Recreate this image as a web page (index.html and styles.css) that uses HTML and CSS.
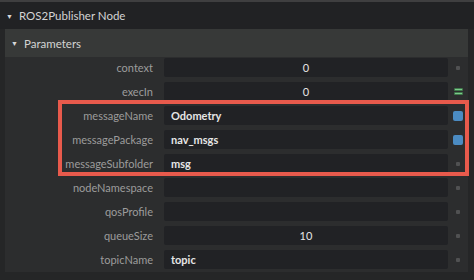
FILE: index.html
```html
<!DOCTYPE html>
<html lang="en">
<head>
  <meta charset="UTF-8">
  <title>ROS2Publisher Node</title>
  <link rel="stylesheet" href="styles.css">
</head>
<body>
  <div class="topline"></div>

  <!-- Node header -->
  <header class="node-header">
    <span class="caret">&#9660;</span>
    <span class="node-title">ROS2Publisher Node</span>
  </header>

  <section class="panel">
    <div class="panel-header">
      <span class="caret">&#9660;</span>
      <span>Parameters</span>
    </div>

    <div class="rows">
      <div class="row">
        <label class="label">context</label>
        <div class="field num">0</div>
        <span class="pin"><span class="dot"></span></span>
      </div>
      <div class="row">
        <label class="label">execIn</label>
        <div class="field num">0</div>
        <span class="pin"><span class="exec"><i></i><i></i></span></span>
      </div>

      <div class="highlight">
        <div class="row">
          <label class="label">messageName</label>
          <div class="field">Odometry</div>
          <span class="pin"><span class="blue"></span></span>
        </div>
        <div class="row">
          <label class="label">messagePackage</label>
          <div class="field">nav_msgs</div>
          <span class="pin"><span class="blue"></span></span>
        </div>
        <div class="row">
          <label class="label">messageSubfolder</label>
          <div class="field">msg</div>
          <span class="pin"><span class="dot"></span></span>
        </div>
      </div>

      <div class="row">
        <label class="label">nodeNamespace</label>
        <div class="field"></div>
        <span class="pin"><span class="dot"></span></span>
      </div>
      <div class="row">
        <label class="label">qosProfile</label>
        <div class="field"></div>
        <span class="pin"><span class="dot"></span></span>
      </div>
      <div class="row">
        <label class="label">queueSize</label>
        <div class="field num">10</div>
        <span class="pin"><span class="dot"></span></span>
      </div>
      <div class="row">
        <label class="label">topicName</label>
        <div class="field">topic</div>
        <span class="pin"><span class="dot"></span></span>
      </div>
    </div>
  </section>
</body>
</html>
```

FILE: styles.css
```css
body {
  margin: 0;
  background-color: #252627;
  font-family: Lato, "Noto Sans", sans-serif;
  font-size: 11px;
  color: #d6d6d6;
  width: 474px;
  height: 280px;
  overflow: hidden;
}

.topline {
  height: 2px;
  background-color: #3f3f40;
}

.node-header {
  height: 27px;
  display: flex;
  align-items: center;
  padding-left: 6px;
  background-color: #212224;
  color: #d4d4d4;
  font-size: 11.5px;
}

.caret {
  font-size: 7px;
  width: 13px;
  color: #d8d8d8;
}

.panel {
  margin-left: 5px;
  width: 463px;
  background-color: #2c2d2e;
  padding-bottom: 3px;
}

.panel-header {
  height: 28px;
  display: flex;
  align-items: center;
  padding-left: 6px;
  background-color: #373938;
  color: #d4d4d4;
  font-size: 11.5px;
}

.rows {
  display: flex;
  flex-direction: column;
  gap: 5px;
  padding-top: 1px;
}

.highlight {
  position: relative;
  display: flex;
  flex-direction: column;
  gap: 5px;
}

.highlight::after {
  content: "";
  position: absolute;
  left: 53px;
  right: -1px;
  top: -6px;
  bottom: -3px;
  border: 4px solid #e85a4c;
  pointer-events: none;
}

.row {
  display: flex;
  align-items: center;
  height: 19px;
}

.label {
  width: 148px;
  margin-right: 11px;
  text-align: right;
  color: #9c9c9c;
  white-space: nowrap;
}

.field {
  width: 284px;
  box-sizing: border-box;
  height: 19px;
  line-height: 19px;
  background-color: #212225;
  border-radius: 2px;
  padding-left: 7px;
  color: #e6e6e6;
  font-weight: 700;
}

.field.num {
  text-align: center;
  padding-left: 0;
  font-weight: 400;
}

.pin {
  width: 20px;
  display: flex;
  justify-content: center;
  align-items: center;
}

.dot {
  width: 4px;
  height: 4px;
  background-color: #505152;
  border-radius: 1px;
}

.blue {
  width: 10px;
  height: 10px;
  background-color: #4b8bc2;
  border-radius: 2px;
}

.exec {
  width: 9px;
  height: 7px;
  display: flex;
  flex-direction: column;
  justify-content: space-between;
}

.exec i {
  height: 3px;
  background-color: #7cc98a;
  border: 1px solid #3f7a4b;
  box-sizing: border-box;
  border-radius: 1px;
}
```
